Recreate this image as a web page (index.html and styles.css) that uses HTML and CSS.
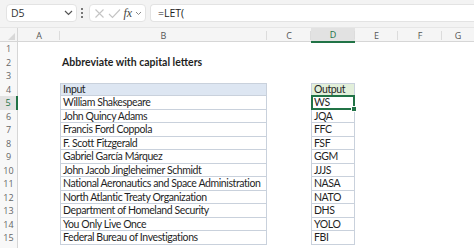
FILE: index.html
```html
<!DOCTYPE html>
<html lang="en">
<head>
    <meta charset="UTF-8">
    <title>Abbreviate with capital letters</title>
    <link rel="stylesheet" href="styles.css">
</head>
<body>

    <div class="formula-bar">
        <div class="name-box">
            <span>D5</span>
            <svg class="chev" width="9" height="6" viewBox="0 0 9 6"><path d="M1 1 L4.5 4.5 L8 1" fill="none" stroke="#555" stroke-width="1.2"/></svg>
        </div>
        <div class="dots"><i></i><i></i><i></i></div>
        <div class="fx-box">
            <svg width="11" height="11" viewBox="0 0 11 11"><path d="M1.5 1.5 L9.5 9.5 M9.5 1.5 L1.5 9.5" stroke="#c4c4c4" stroke-width="1.1"/></svg>
            <svg width="13" height="11" viewBox="0 0 13 11"><path d="M1 6 L4.5 9.5 L12 1.5" fill="none" stroke="#c4c4c4" stroke-width="1.1"/></svg>
            <span class="fx">fx</span>
            <svg width="7" height="5" viewBox="0 0 7 5"><path d="M1 1 L3.5 3.5 L6 1" fill="none" stroke="#888" stroke-width="1"/></svg>
        </div>
        <div class="formula-input">=LET(</div>
    </div>

    <div class="sheet">
        <div class="row col-head">
            <div class="corner"></div>
            <div class="ch">A</div>
            <div class="ch">B</div>
            <div class="ch">C</div>
            <div class="ch sel">D</div>
            <div class="ch">E</div>
            <div class="ch">F</div>
            <div class="ch last">G</div>
        </div>

        <div class="row"><div class="rh">1</div></div>
        <div class="row"><div class="rh">2</div><div></div><div class="cell title">Abbreviate with capital letters</div></div>
        <div class="row"><div class="rh">3</div></div>
        <div class="row">
            <div class="rh">4</div><div></div>
            <div class="cell tb in-head">Input</div><div></div>
            <div class="cell tb out-head">Output</div>
        </div>
        <div class="row">
            <div class="rh active">5</div><div></div>
            <div class="cell tb">William Shakespeare</div><div></div>
            <div class="cell tb current">WS<span class="handle"></span></div>
        </div>
        <div class="row">
            <div class="rh">6</div><div></div>
            <div class="cell tb">John Quincy Adams</div><div></div>
            <div class="cell tb">JQA</div>
        </div>
        <div class="row">
            <div class="rh">7</div><div></div>
            <div class="cell tb">Francis Ford Coppola</div><div></div>
            <div class="cell tb">FFC</div>
        </div>
        <div class="row">
            <div class="rh">8</div><div></div>
            <div class="cell tb">F. Scott Fitzgerald</div><div></div>
            <div class="cell tb">FSF</div>
        </div>
        <div class="row">
            <div class="rh">9</div><div></div>
            <div class="cell tb">Gabriel García Márquez</div><div></div>
            <div class="cell tb">GGM</div>
        </div>
        <div class="row">
            <div class="rh">10</div><div></div>
            <div class="cell tb">John Jacob Jingleheimer Schmidt</div><div></div>
            <div class="cell tb">JJJS</div>
        </div>
        <div class="row">
            <div class="rh">11</div><div></div>
            <div class="cell tb">National Aeronautics and Space Administration</div><div></div>
            <div class="cell tb">NASA</div>
        </div>
        <div class="row">
            <div class="rh">12</div><div></div>
            <div class="cell tb">North Atlantic Treaty Organization</div><div></div>
            <div class="cell tb">NATO</div>
        </div>
        <div class="row">
            <div class="rh">13</div><div></div>
            <div class="cell tb">Department of Homeland Security</div><div></div>
            <div class="cell tb">DHS</div>
        </div>
        <div class="row">
            <div class="rh">14</div><div></div>
            <div class="cell tb">You Only Live Once</div><div></div>
            <div class="cell tb">YOLO</div>
        </div>
        <div class="row">
            <div class="rh">15</div><div></div>
            <div class="cell tb">Federal Bureau of Investigations</div><div></div>
            <div class="cell tb">FBI</div>
        </div>
        <div class="row"><div class="rh"></div></div>
    </div>

</body>
</html>
```

FILE: styles.css
```css
body {
    margin: 0;
    background: #fff;
    font-family: Lato, "Open Sans", sans-serif;
    font-size: 10.5px;
    color: #1f1f1f;
    overflow: hidden;
}

/* formula bar */
.formula-bar {
    display: flex;
    align-items: center;
    height: 27px;
    padding: 0 0 1px 6px;
    box-sizing: border-box;
    background: #f3f3f3;
}

.name-box,
.fx-box,
.formula-input {
    display: flex;
    align-items: center;
    height: 18px;
    box-sizing: border-box;
    background: #fff;
    border: 1px solid #e3e3e3;
    border-radius: 4px;
}

.name-box {
    width: 71px;
    padding: 0 3px 0 4px;
    justify-content: space-between;
    font-family: "Open Sans", sans-serif;
    font-size: 10.5px;
    color: #333;
}

.dots {
    display: flex;
    flex-direction: column;
    gap: 2px;
    margin: 0 6px 0 4px;
}

.dots i {
    display: block;
    width: 2px;
    height: 2px;
    background: #777;
}

.fx-box {
    width: 57px;
    padding: 0 3px 0 4px;
    justify-content: space-between;
}

.fx {
    font-family: "Liberation Serif", serif;
    font-style: italic;
    font-size: 12px;
    color: #444;
}

.formula-input {
    flex: 1;
    margin-left: 4px;
    padding-left: 7px;
    border-right: none;
    border-radius: 4px 0 0 4px;
    font-family: "Open Sans", sans-serif;
    font-size: 10.5px;
    color: #222;
}

/* sheet */
.sheet {
    border-top: 1px solid #e6e6e6;
}

.row {
    display: grid;
    grid-template-columns: 18px 42px 207px 44px 44px 43px 44px 32px;
    height: 13.5px;
}

.col-head {
    height: 13px;
    background: #f5f5f5;
    border-bottom: 1px solid #d6d6d6;
    font-family: "Open Sans", sans-serif;
    font-size: 9px;
    color: #555;
}

.corner {
    position: relative;
    border-right: 1px solid #d6d6d6;
}

.corner::after {
    content: "";
    position: absolute;
    right: 2px;
    bottom: 2px;
    border-left: 7px solid transparent;
    border-bottom: 7px solid #d8d8d8;
}

.ch {
    display: flex;
    align-items: center;
    justify-content: center;
    position: relative;
}

.ch::after {
    content: "";
    position: absolute;
    right: 0;
    top: 3px;
    bottom: 2px;
    border-right: 1px solid #dcdcdc;
}

.ch.last::after {
    display: none;
}

.ch.sel {
    background: #e2e2e2;
    border-bottom: 2px solid #217346;
    margin-bottom: -1px;
    color: #217346;
}

.rh {
    display: flex;
    align-items: center;
    justify-content: center;
    background: #f8f8f8;
    border-right: 1px solid #d6d6d6;
    font-family: "Open Sans", sans-serif;
    font-size: 9px;
    color: #666;
}

.rh.active {
    background: #e2e2e2;
    border-right: 2px solid #217346;
    color: #217346;
}

.cell {
    position: relative;
    padding-left: 2px;
    line-height: 13.5px;
    letter-spacing: -0.4px;
    white-space: nowrap;
    box-sizing: border-box;
}

.title {
    font-weight: bold;
    letter-spacing: 0;
}

.tb {
    border: 1px solid #c9d1dc;
    border-top: none;
    line-height: 12.5px;
}

.in-head {
    border-top: 1px solid #c9d1dc;
    background: #dde6f2;
    line-height: 11.5px;
}

.out-head {
    border-top: 1px solid #c9d1dc;
    background: #e2efda;
    line-height: 11.5px;
}

.current {
    border: 2px solid #217346;
    margin-top: -1px;
    height: 14.5px;
    padding-left: 1px;
    line-height: 11px;
    z-index: 1;
}

.handle {
    position: absolute;
    right: -4px;
    bottom: -4px;
    width: 4px;
    height: 4px;
    background: #217346;
    border: 1px solid #fff;
}
```
